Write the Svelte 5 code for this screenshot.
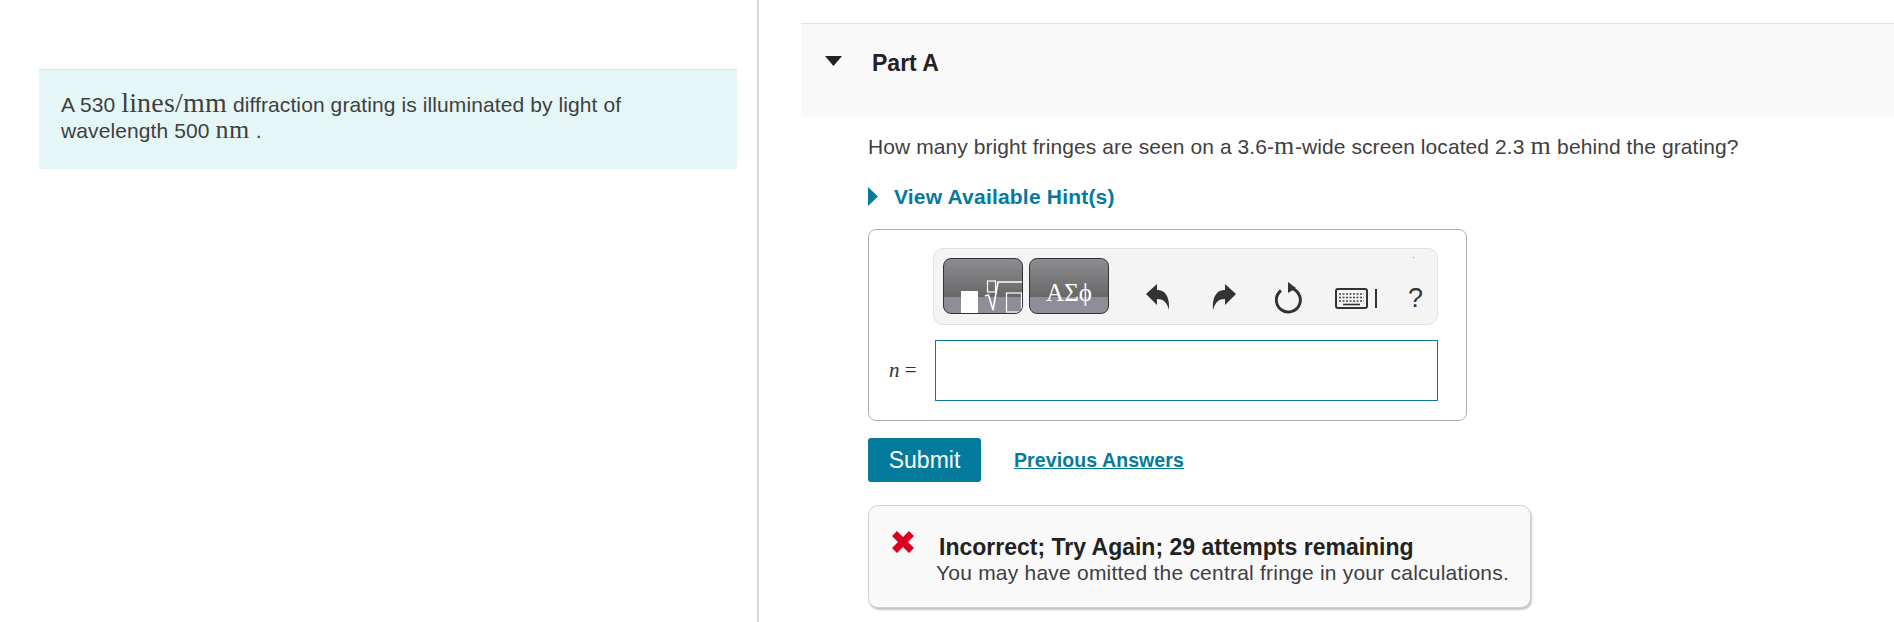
<script>
	let answer = $state('');
</script>

<div class="page">
	<section class="left">
		<div class="intro">
			A 530 <span class="math big">lines/mm</span> diffraction grating is illuminated by light of<br />
			wavelength 500 <span class="math">nm</span> .
		</div>
	</section>

	<section class="right">
		<header class="part-head">
			<svg class="caret" width="17" height="10" viewBox="0 0 17 10"><path d="M0 0H17L8.5 10Z" fill="#222" /></svg>
			<h2>Part A</h2>
		</header>

		<div class="part-body">
			<p class="question">
				How many bright fringes are seen on a 3.6-<span class="math">m</span>-wide screen located 2.3 <span class="math">m</span> behind the grating?
			</p>

			<div class="hint">
				<svg width="10" height="19" viewBox="0 0 10 19"><path d="M0 0L10 9.5L0 19Z" fill="#047a9c" /></svg>
				<span>View Available Hint(s)</span>
			</div>

			<div class="answer-box">
				<div class="toolbar">
					<span class="speck"></span>
					<button class="tpl" aria-label="templates">
						<svg width="78" height="54" viewBox="0 0 78 54">
							<rect x="17" y="32" width="17" height="22" fill="#fff" />
							<g fill="none" stroke="#fff" stroke-width="1.2">
								<rect x="43.5" y="22" width="8" height="11" />
								<path d="M41 37L44.5 36L49 51L54 23H78" stroke-width="1.6" />
								<rect x="62.500" y="34" width="15" height="19" />
							</g>
						</svg>
					</button>
					<button class="tpl sym">ΑΣϕ</button>

					<svg class="ico undo" width="24" height="28" viewBox="0 0 24 28">
						<path d="M0 10L11 0V6C18 6 24 11 23 26C21 18 17 15 11 15V21Z" fill="#333" />
					</svg>
					<svg class="ico redo" width="24" height="28" viewBox="0 0 24 28">
						<path d="M24 10L13 0V6C6 6 0 11 1 26C3 18 7 15 13 15V21Z" fill="#333" />
					</svg>
					<svg class="ico reset" width="28" height="32" viewBox="0 0 28 32">
						<path d="M15 6A12 12 0 1 1 7 8.500" fill="none" stroke="#333" stroke-width="3" />
						<path d="M14 0L22 6L14 11Z" fill="#333" />
					</svg>
					<svg class="ico keys" width="44" height="21" viewBox="0 0 44 21">
						<rect x="1" y="1" width="31" height="19" rx="2" fill="#f4f4f4" stroke="#333" stroke-width="2" />
						<path d="M4 6H29M4 9.500H29M4 13H29" stroke="#444" stroke-width="1.500" stroke-dasharray="2 1.500" />
						<path d="M8 16.500H25" stroke="#333" stroke-width="1.600" />
						<rect x="40" y="1" width="2" height="19" fill="#333" />
					</svg>
					<span class="help">?</span>
				</div>

				<div class="answer-row">
					<label for="ans"><i>n</i> =</label>
					<input id="ans" type="text" bind:value={answer} />
				</div>
			</div>

			<div class="actions">
				<button class="submit">Submit</button>
				<a href="#prev" class="prev">Previous Answers</a>
			</div>

			<div class="feedback">
				<div class="fb-title">
					<svg width="22" height="22" viewBox="0 0 22 22"><path d="M5 0L11 6L17 0L22 5L16 11L22 17L17 22L11 16L5 22L0 17L6 11L0 5Z" fill="#db0020" /></svg>
					<strong>Incorrect; Try Again; 29 attempts remaining</strong>
				</div>
				<p>You may have omitted the central fringe in your calculations.</p>
			</div>
		</div>
	</section>
</div>

<style>
	:global(body) {
		margin: 0;
		background: #fff;
	}

	.page {
		display: flex;
		height: 622px;
		overflow: hidden;
		font-family: "Liberation Sans", Arial, sans-serif;
		color: #3f3f3f;
		font-size: 21px;
	}

	.math {
		font-family: "Liberation Serif", serif;
		font-size: 26px;
		line-height: 0;
		letter-spacing: 0.6px;
	}

	.math.big {
		font-size: 28px;
		letter-spacing: 0.2px;
	}

	.left {
		box-sizing: border-box;
		width: 759px;
		flex: none;
		border-right: 2px solid #d3d3d8;
		padding: 69px 20px 0 39px;
	}

	.intro {
		box-sizing: border-box;
		height: 100px;
		background: #e5f6f7;
		border-top: 1px solid #d9e2e4;
		padding: 22px 22px 0;
		line-height: 26px;
		letter-spacing: 0.1px;
	}

	.right {
		flex: 1;
		min-width: 0;
		padding: 23px 0 0 42px;
	}

	.part-head {
		box-sizing: border-box;
		height: 94px;
		background: #f9f9f9;
		border-top: 1px solid #e2e2e2;
		display: flex;
		align-items: flex-start;
		padding: 26px 0 0 24px;
		color: #222;
	}

	.caret {
		margin-top: 6px;
	}

	h2 {
		margin: 0 0 0 30px;
		font-size: 23px;
		line-height: 26px;
		font-weight: 700;
	}

	.part-body {
		padding: 0 0 0 67px;
	}

	.question {
		margin: 16px 0 0;
		line-height: 27px;
		letter-spacing: 0.08px;
	}

	.hint {
		display: flex;
		align-items: center;
		gap: 16px;
		margin-top: 23px;
		height: 27px;
		color: #047a9c;
		font-weight: 700;
		letter-spacing: 0.2px;
	}

	.answer-box {
		box-sizing: border-box;
		width: 599px;
		height: 192px;
		margin-top: 19px;
		border: 1px solid #aeaeae;
		border-radius: 8px;
		padding: 18px 28px 0 64px;
	}

	.toolbar {
		position: relative;
		box-sizing: border-box;
		height: 77px;
		background: #f4f4f4;
		border: 1px solid #e2e2e2;
		border-radius: 10px;
		display: flex;
		align-items: center;
		padding: 22px 0 0 9px;
	}

	.speck {
		position: absolute;
		left: 479px;
		top: 8px;
		width: 1px;
		height: 1px;
		background: #888;
	}

	.tpl {
		box-sizing: border-box;
		width: 80px;
		height: 56px;
		margin: -24px 6px 0 0;
		padding: 0;
		border: 1px solid #333;
		border-radius: 8px;
		overflow: hidden;
		background: linear-gradient(#8d8c91 0, #676767 71%, #8f8e98 71%, #8f8e98 100%);
		display: flex;
	}

	.sym {
		color: #fff;
		font-family: "Liberation Serif", serif;
		font-size: 25px;
		align-items: flex-end;
		justify-content: center;
		padding-bottom: 6px;
	}

	.ico {
		flex: none;
	}

	.undo {
		margin: 0 0 0 31px;
	}

	.redo {
		margin: 0 0 0 42px;
	}

	.reset {
		margin: 0 0 0 38px;
	}

	.keys {
		margin: 2px 0 0 33px;
	}

	.help {
		margin: 0 0 0 29px;
		font-size: 27px;
		color: #333;
		line-height: 30px;
	}

	.answer-row {
		display: flex;
		align-items: center;
		margin: 15px 0 0 -44px;
	}

	label {
		width: 46px;
		font-family: "Liberation Serif", serif;
		font-size: 21px;
		color: #333;
		white-space: nowrap;
	}

	input {
		box-sizing: border-box;
		width: 503px;
		height: 61px;
		border: 1px solid #0f7a9c;
		outline: none;
		background: #fff;
		padding: 0 8px;
	}

	.actions {
		display: flex;
		align-items: center;
		margin-top: 17px;
	}

	.submit {
		width: 113px;
		height: 44px;
		border: none;
		border-radius: 3px;
		background: #047a9c;
		color: #fff;
		font: 400 23px "Liberation Sans", Arial, sans-serif;
		padding: 0;
	}

	.prev {
		margin-left: 33px;
		color: #047a9c;
		font-weight: 700;
		font-size: 19.5px;
		letter-spacing: 0.1px;
	}

	.feedback {
		box-sizing: border-box;
		width: 663px;
		height: 103px;
		margin-top: 23px;
		background: #f9f9f9;
		border: 1px solid #cfcfcf;
		border-radius: 10px;
		box-shadow: 1px 2px 2px #c4c4c4;
		padding: 25px 0 0 23px;
	}

	.fb-title {
		display: flex;
		align-items: flex-start;
		gap: 25px;
		height: 24px;
		color: #222;
		font-size: 23px;
	}

	.fb-title strong {
		margin-top: 4px;
		line-height: 24px;
	}

	.feedback p {
		margin: 6px 0 0 44px;
		line-height: 24px;
		letter-spacing: 0.22px;
	}
</style>
